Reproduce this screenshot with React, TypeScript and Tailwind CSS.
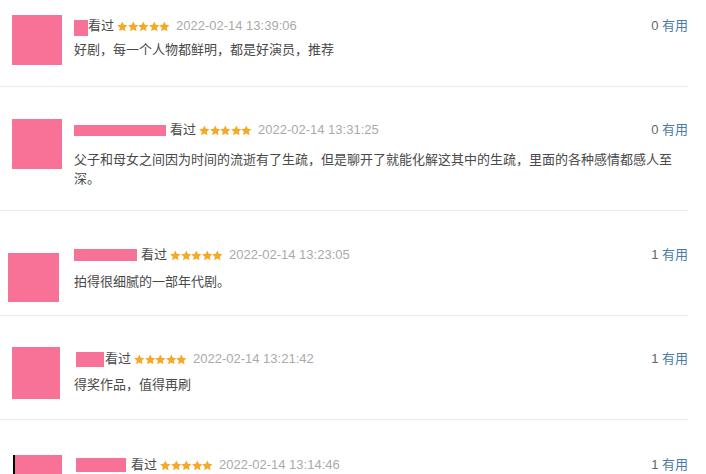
import React from 'react';

type Review = {
  id: number;
  date: string;
  text?: string;
  useful: number;
  rowPad: string;
  avatar: string;
  nameBox: string;
  textGap: string;
  bottom: string;
};

const reviews: Review[] = [
  {
    id: 1,
    date: '2022-02-14 13:39:06',
    text: '好剧，每一个人物都鲜明，都是好演员，推荐',
    useful: 0,
    rowPad: 'pt-[16px]',
    avatar: 'ml-[12px] mt-[-1px] w-[50px] h-[50px]',
    nameBox: 'w-[14px] h-[16px] mt-[4px] mr-0',
    textGap: 'mt-[4px]',
    bottom: 'pb-[27px]',
  },
  {
    id: 2,
    date: '2022-02-14 13:31:25',
    text: '父子和母女之间因为时间的流逝有了生疏，但是聊开了就能化解这其中的生疏，里面的各种感情都感人至深。',
    useful: 0,
    rowPad: 'pt-[33px]',
    avatar: 'ml-[12px] mt-[-1px] w-[50px] h-[50px]',
    nameBox: 'w-[92px] h-[11px] mr-[4px]',
    textGap: 'mt-[10px]',
    bottom: 'pb-[22px]',
  },
  {
    id: 3,
    date: '2022-02-14 13:23:05',
    text: '拍得很细腻的一部年代剧。',
    useful: 1,
    rowPad: 'pt-[34px]',
    avatar: 'ml-[8px] mt-[8px] w-[51px] h-[49px]',
    nameBox: 'w-[63px] h-[12px] mr-[4px]',
    textGap: 'mt-[7px]',
    bottom: 'pb-[24px]',
  },
  {
    id: 4,
    date: '2022-02-14 13:21:42',
    text: '得奖作品，值得再刷',
    useful: 1,
    rowPad: 'pt-[33px]',
    avatar: 'ml-[12px] mt-[-2px] w-[48px] h-[52px]',
    nameBox: 'w-[28px] h-[15px] ml-[2px] mr-[1px]',
    textGap: 'mt-[6px]',
    bottom: 'pb-[25px]',
  },
  {
    id: 5,
    date: '2022-02-14 13:14:46',
    useful: 1,
    rowPad: 'pt-[35px]',
    avatar: 'ml-[13px] mt-0 w-[49px] h-[50px] border-l-2 border-black',
    nameBox: 'w-[50px] h-[14px] ml-[2px] mr-[5px]',
    textGap: 'mt-[6px]',
    bottom: 'pb-[25px]',
  },
];

const Star = () => (
  <svg width="10.6" height="11" viewBox="0 0 24 24" className="shrink-0">
    <path
      d="M12 0.5l3.5 7.6 8.2.9-6.1 5.6 1.7 8.1L12 18.6l-7.3 4.1 1.7-8.1L0.3 9l8.2-.9z"
      fill="#f5a927"
    />
  </svg>
);

const ReviewRow = ({ r }: { r: Review }) => (
  <div className={`flex border-b border-[#eaeaea] mr-[18px] ${r.rowPad}`}>
    <div className="w-[74px] shrink-0">
      <div className={`bg-[#f77296] ${r.avatar}`} />
    </div>
    <div className={`flex-1 min-w-0 ${r.bottom}`}>
      <div className="flex items-center h-5 leading-5">
        <div className={`bg-[#f77296] shrink-0 ${r.nameBox}`} />
        <span className="text-[#494949]">看过</span>
        <span className="flex items-center ml-[3px]">
          <Star />
          <Star />
          <Star />
          <Star />
          <Star />
        </span>
        <span className="ml-[6px] text-[#aaaaaa]">{r.date}</span>
        <span className="ml-auto text-[#666]">
          {r.useful} <span className="text-[#4a7aa8]">有用</span>
        </span>
      </div>
      {r.text && (
        <p className={`leading-[19px] text-[#494949] ${r.textGap}`}>{r.text}</p>
      )}
    </div>
  </div>
);

export default function App() {
  return (
    <div
      className="w-[706px] h-[474px] overflow-hidden bg-white text-[13px]"
      style={{ fontFamily: '"Liberation Sans", "Noto Sans CJK SC", sans-serif' }}
    >
      {reviews.map((r) => (
        <ReviewRow key={r.id} r={r} />
      ))}
    </div>
  );
}
